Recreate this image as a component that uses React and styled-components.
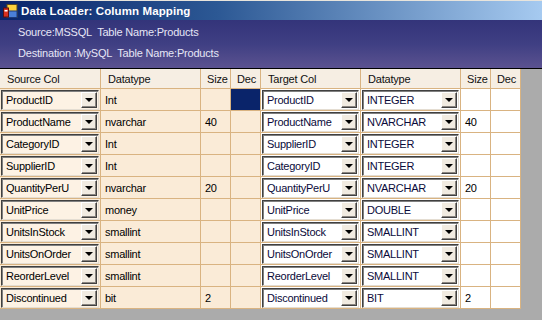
import React from 'react';
import styled, { createGlobalStyle } from 'styled-components';

const GlobalStyle = createGlobalStyle`
  html, body {
    margin: 0;
    padding: 0;
    background: #ababab;
  }
  * {
    box-sizing: border-box;
  }
`;

// окно целиком
const Window = styled.div`
  width: 542px;
  height: 320px;
  background: #ababab;
  display: flex;
  flex-direction: column;
  overflow: hidden;
  font-family: 'Liberation Sans', Arial, sans-serif;
`;

// заголовок окна
const TitleBar = styled.div`
  height: 20px;
  display: flex;
  align-items: center;
  gap: 3px;
  padding-left: 2px;
  background: linear-gradient(to right, #0a246a 0%, #2c5894 40%, #a6caf0 100%);
  border-top: 1px solid #e8e4dc;
`;

const Title = styled.span`
  color: #ffffff;
  font-weight: bold;
  font-size: 11.5px;
  letter-spacing: 0.1px;
`;

// полоса с информацией о таблицах
const Banner = styled.div`
  height: 49px;
  padding: 2px 0 0 18px;
  background: linear-gradient(to bottom, #33347a 0%, #3f3f83 50%, #5b5290 100%);
  border-bottom: 1px solid #000000;
`;

const BannerLine = styled.div`
  height: 21px;
  line-height: 21px;
  color: #e6e6f6;
  font-size: 11px;
  letter-spacing: -0.2px;
  white-space: pre;
`;

// таблица
const Grid = styled.div`
  display: grid;
  grid-template-columns: 101px 100px 30px 30px 100px 100px 30px 30px;
  width: 521px;
`;

const HeadCell = styled.div`
  height: 20px;
  display: flex;
  align-items: center;
  padding-left: ${(p) => (p.$narrow ? '6px' : '7px')};
  background: #f6eee3;
  border-right: 1px solid #d9b381;
  border-bottom: 1px solid #d9b381;
  color: #101010;
  font-size: 11px;
  letter-spacing: -0.2px;
  white-space: nowrap;
  overflow: hidden;
`;

const Cell = styled.div`
  height: 22px;
  display: flex;
  align-items: center;
  padding: ${(p) => (p.$combo ? '0 1px 0 1px' : '0 0 0 4px')};
  background: ${(p) => (p.$selected ? '#0a246a' : p.$source ? '#faebd7' : '#ffffff')};
  border-right: 1px solid #d9b381;
  border-bottom: 1px solid #d9b381;
  color: #000000;
  font-size: 11px;
  letter-spacing: -0.25px;
  white-space: nowrap;
  overflow: hidden;
`;

// выпадающий список
const ComboBox = styled.div`
  width: 100%;
  height: 20px;
  display: flex;
  align-items: center;
  background: ${(p) => (p.$source ? '#fdf2e4' : '#ffffff')};
  border-top: 1px solid #404040;
  border-left: 1px solid #404040;
  border-right: 1px solid #e4ddd2;
  border-bottom: 1px solid #e4ddd2;
  box-shadow: inset 1px 1px 0 #808080;
  padding: 0 1px 0 4px;
`;

const ComboText = styled.span`
  flex: 1;
  overflow: hidden;
  white-space: nowrap;
  color: ${(p) => (p.$source ? '#000000' : '#0a0a3a')};
`;

const DropButton = styled.div`
  width: 16px;
  height: 16px;
  flex: none;
  display: flex;
  align-items: center;
  justify-content: center;
  background: #f1ebe1;
  border-top: 1px solid #ffffff;
  border-left: 1px solid #ffffff;
  border-right: 1px solid #404040;
  border-bottom: 1px solid #404040;
  box-shadow: inset -1px -1px 0 #8a8580;
`;

const Arrow = styled.span`
  width: 0;
  height: 0;
  border-left: 4px solid transparent;
  border-right: 4px solid transparent;
  border-top: 4px solid #000000;
  margin-top: 1px;
`;

const AppIcon = () => (
  <svg width="16" height="16" viewBox="0 0 16 16">
    <rect x="5" y="1.5" width="10" height="13" fill="#ffd23c" stroke="#5a4a20" strokeWidth="1" />
    <rect x="6" y="8" width="9" height="6.5" fill="#4a7fd8" stroke="#1d3a78" strokeWidth="1" />
    <rect x="1.5" y="5" width="5" height="9" fill="#d83020" stroke="#5a1010" strokeWidth="1" />
    <rect x="2.5" y="7" width="3" height="1.5" fill="#ffffff" />
  </svg>
);

const Combo = ({ value, source }) => (
  <ComboBox $source={source}>
    <ComboText $source={source}>{value}</ComboText>
    <DropButton>
      <Arrow />
    </DropButton>
  </ComboBox>
);

const headers = ['Source Col', 'Datatype', 'Size', 'Dec', 'Target Col', 'Datatype', 'Size', 'Dec'];

// в списке видна только часть длинного имени
const rows = [
  ['ProductID', 'Int', '', '', 'ProductID', 'INTEGER', '', ''],
  ['ProductName', 'nvarchar', '40', '', 'ProductName', 'NVARCHAR', '40', ''],
  ['CategoryID', 'Int', '', '', 'SupplierID', 'INTEGER', '', ''],
  ['SupplierID', 'Int', '', '', 'CategoryID', 'INTEGER', '', ''],
  ['QuantityPerU', 'nvarchar', '20', '', 'QuantityPerU', 'NVARCHAR', '20', ''],
  ['UnitPrice', 'money', '', '', 'UnitPrice', 'DOUBLE', '', ''],
  ['UnitsInStock', 'smallint', '', '', 'UnitsInStock', 'SMALLINT', '', ''],
  ['UnitsOnOrder', 'smallint', '', '', 'UnitsOnOrder', 'SMALLINT', '', ''],
  ['ReorderLevel', 'smallint', '', '', 'ReorderLevel', 'SMALLINT', '', ''],
  ['Discontinued', 'bit', '2', '', 'Discontinued', 'BIT', '2', ''],
];

// колонки со списками: 0, 4, 5
const comboCols = [0, 4, 5];

const App = () => {
  return (
    <>
      <GlobalStyle />
      <Window>
        <TitleBar>
          <AppIcon />
          <Title>Data Loader: Column Mapping</Title>
        </TitleBar>
        <Banner>
          <BannerLine>{'Source:MSSQL  Table Name:Products'}</BannerLine>
          <BannerLine>{'Destination :MySQL  Table Name:Products'}</BannerLine>
        </Banner>
        <Grid>
          {headers.map((h, i) => (
            <HeadCell key={i} $narrow={i === 2 || i === 3 || i === 6 || i === 7}>
              {h}
            </HeadCell>
          ))}
          {rows.map((row, r) =>
            row.map((value, c) => {
              const source = c < 4;
              const isCombo = comboCols.includes(c);
              return (
                <Cell
                  key={`${r}-${c}`}
                  $source={source}
                  $combo={isCombo}
                  $selected={r === 0 && c === 3}
                >
                  {isCombo ? <Combo value={value} source={source} /> : value}
                </Cell>
              );
            })
          )}
        </Grid>
      </Window>
    </>
  );
};

export default App;
